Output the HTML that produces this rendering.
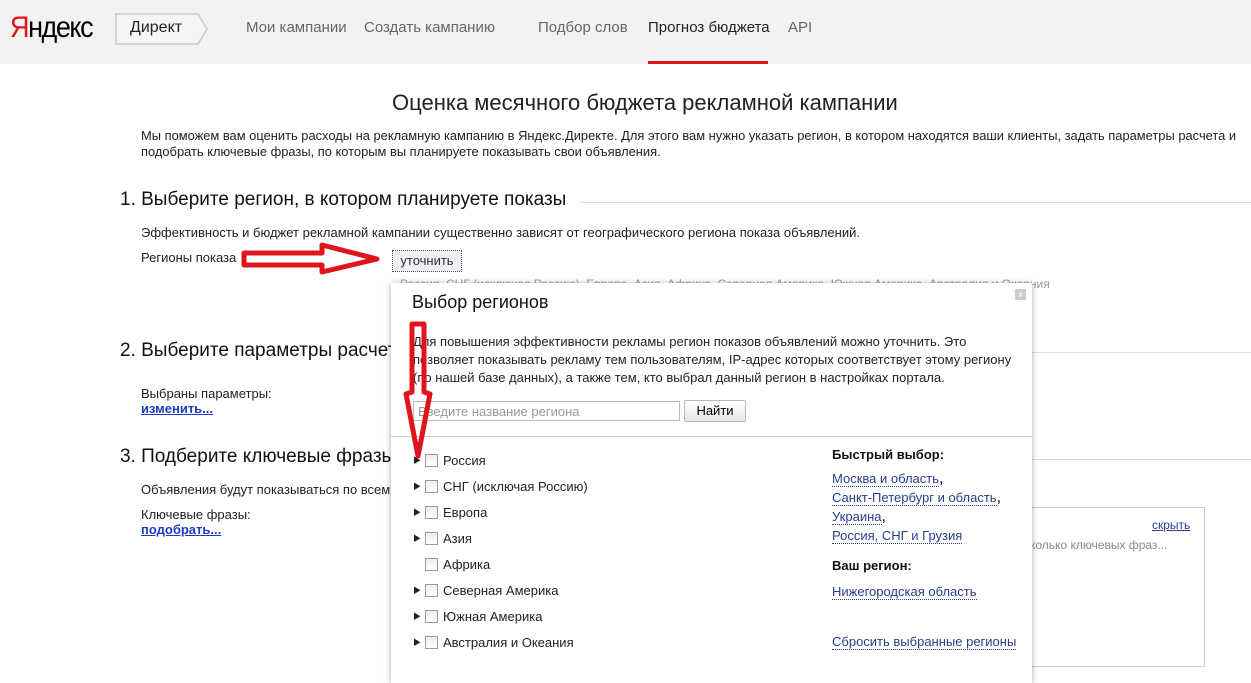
<!DOCTYPE html>
<html><head><meta charset="utf-8"><style>
*{margin:0;padding:0;box-sizing:border-box}
body{width:1251px;height:659px;overflow:hidden;background:#fff;font-family:"Liberation Sans","Noto Sans CJK SC",sans-serif;color:#000;position:relative}
.a{position:absolute;white-space:nowrap}
.hdr{position:absolute;left:0;top:0;width:1251px;height:64px;background:#f2f2f2}
.nav{font-size:15px;color:#666;top:19px}
.h2{font-size:19px;color:#111}
.t{font-size:13px;color:#222}
.lk{font-size:13px;color:#1a3dc1;font-weight:bold;text-decoration:underline}
.line{position:absolute;height:1px;background:#ddd}
.pop{position:absolute;left:391px;top:283px;width:641px;height:400px;background:#fff;box-shadow:0 1px 6px rgba(0,0,0,.35)}
.row{position:absolute;left:22px;font-size:13px;color:#222}
.row .tri{display:inline-block;width:12px;font-size:8px;color:#222;vertical-align:2px}
.row .cb{display:inline-block;width:13px;height:13px;border:1px solid #999;background:linear-gradient(#eee,#fff);vertical-align:-2px;margin-right:5px}
.ql{color:#2a3d8a;font-size:13px;border-bottom:1px dotted #2a3d8a}
</style></head><body>
<div class="hdr"></div>
<div class="a" style="left:10px;top:11px;font-size:30px;letter-spacing:-1.6px;transform:scaleX(.9);transform-origin:left top;font-family:'Liberation Sans Narrow','Liberation Sans',sans-serif"><span style="color:#e0141d">Я</span>ндекс</div>
<svg class="a" style="left:115px;top:13px" width="95" height="32"><path d="M1 1H83L92 16L83 31H1Z" fill="#f5f5f5" stroke="#ccc" stroke-width="1.5"/></svg>
<div class="a" style="left:130px;top:19px;font-size:16px;color:#222">Директ</div>
<div class="a nav" style="left:246px">Мои кампании</div>
<div class="a nav" style="left:364px">Создать кампанию</div>
<div class="a nav" style="left:538px">Подбор слов</div>
<div class="a nav" style="left:648px;color:#222">Прогноз бюджета</div>
<div class="a nav" style="left:788px">API</div>
<div class="a" style="left:648px;top:61px;width:120px;height:3px;background:#e0141d"></div>

<div class="a" style="left:392px;top:90px;font-size:22px;color:#222">Оценка месячного бюджета рекламной кампании</div>
<div class="a t" style="left:141px;top:128px;line-height:16px;font-size:12.9px">Мы поможем вам оценить расходы на рекламную кампанию в Яндекс.Директе. Для этого вам нужно указать регион, в котором находятся ваши клиенты, задать параметры расчета и<br>подобрать ключевые фразы, по которым вы планируете показывать свои объявления.</div>

<div class="a h2" style="left:120px;top:189px">1. Выберите регион, в котором планируете показы</div>
<div class="line" style="left:580px;top:202px;width:671px"></div>
<div class="a t" style="left:141px;top:225px">Эффективность и бюджет рекламной кампании существенно зависят от географического региона показа объявлений.</div>
<div class="a t" style="left:141px;top:250px">Регионы показа</div>
<div class="a" style="left:392px;top:250px;width:70px;height:22px;border:1px dotted #555;background:#eef0f3;font-size:13px;color:#333;text-align:center;line-height:20px">уточнить</div>
<div class="a" style="left:400px;top:277px;font-size:12px;color:#999">Россия, СНГ (исключая Россию), Европа, Азия, Африка, Северная Америка, Южная Америка, Австралия и Океания</div>

<div class="a h2" style="left:120px;top:340px">2. Выберите параметры расчета</div>
<div class="line" style="left:1032px;top:352px;width:219px"></div>
<div class="a t" style="left:141px;top:386px">Выбраны параметры:</div>
<div class="a lk" style="left:141px;top:401px">изменить...</div>

<div class="a h2" style="left:120px;top:446px">3. Подберите ключевые фразы</div>
<div class="line" style="left:1032px;top:459px;width:219px"></div>
<div class="a t" style="left:141px;top:482px">Объявления будут показываться по всем запросам</div>
<div class="a t" style="left:141px;top:507px">Ключевые фразы:</div>
<div class="a lk" style="left:141px;top:522px">подобрать...</div>
<div class="a" style="left:1000px;top:507px;width:205px;height:160px;border:1px solid #ccc"></div>
<div class="a" style="left:1152px;top:518px;font-size:12px;color:#2a3d8a;text-decoration:underline">скрыть</div>
<div class="a" style="left:1030px;top:538px;font-size:12px;color:#888">колько ключевых фраз...</div>

<div class="pop">
<div class="a" style="left:624px;top:6px;width:11px;height:11px;background:#ccc;color:#fff;font-size:9px;line-height:11px;text-align:center">x</div>
<div class="a" style="left:21px;top:9px;font-size:18px;color:#111">Выбор регионов</div>
<div class="a t" style="left:22px;top:50px;line-height:18px;font-size:13px">Для повышения эффективности рекламы регион показов объявлений можно уточнить. Это<br>позволяет показывать рекламу тем пользователям, IP-адрес которых соответствует этому региону<br>(по нашей базе данных), а также тем, кто выбрал данный регион в настройках портала.</div>
<div class="a" style="left:22px;top:118px;width:267px;height:20px;border:1px solid #bbb;font-size:13px;color:#999;padding:2px 4px">Введите название региона</div>
<div class="a" style="left:293px;top:117px;width:62px;height:22px;border:1px solid #bbb;border-radius:2px;background:linear-gradient(#fff,#e6e6e6);font-size:13px;text-align:center;line-height:20px">Найти</div>
<div class="line" style="left:0;top:153px;width:641px;background:#ccc"></div>
<div class="row" style="top:170px"><span class="tri">▶</span><span class="cb"></span>Россия</div>
<div class="row" style="top:196px"><span class="tri">▶</span><span class="cb"></span>СНГ (исключая Россию)</div>
<div class="row" style="top:222px"><span class="tri">▶</span><span class="cb"></span>Европа</div>
<div class="row" style="top:248px"><span class="tri">▶</span><span class="cb"></span>Азия</div>
<div class="row" style="top:274px"><span class="tri"></span><span class="cb"></span>Африка</div>
<div class="row" style="top:300px"><span class="tri">▶</span><span class="cb"></span>Северная Америка</div>
<div class="row" style="top:326px"><span class="tri">▶</span><span class="cb"></span>Южная Америка</div>
<div class="row" style="top:352px"><span class="tri">▶</span><span class="cb"></span>Австралия и Океания</div>
<div class="a" style="left:441px;top:164px;font-size:13px;font-weight:bold;color:#111">Быстрый выбор:</div>
<div class="a" style="left:441px;top:187px"><span class="ql">Москва и область</span>,</div>
<div class="a" style="left:441px;top:206px"><span class="ql">Санкт-Петербург и область</span>,</div>
<div class="a" style="left:441px;top:225px"><span class="ql">Украина</span>,</div>
<div class="a" style="left:441px;top:244px"><span class="ql">Россия, СНГ и Грузия</span></div>
<div class="a" style="left:441px;top:275px;font-size:13px;font-weight:bold;color:#111">Ваш регион:</div>
<div class="a" style="left:441px;top:300px"><span class="ql">Нижегородская область</span></div>
<div class="a" style="left:441px;top:350px"><span class="ql">Сбросить выбранные регионы</span></div>
</div>

<svg class="a" style="left:0;top:0" width="1251" height="659">
<path d="M244 253H322V245L377 259L322 272V265H244Z" fill="none" stroke="#e0141d" stroke-width="5" stroke-linejoin="round"/>
<path d="M412 324H424V392L430 394L418 456L406 394L412 392Z" fill="none" stroke="#e0141d" stroke-width="5" stroke-linejoin="round"/>
</svg>
</body></html>
